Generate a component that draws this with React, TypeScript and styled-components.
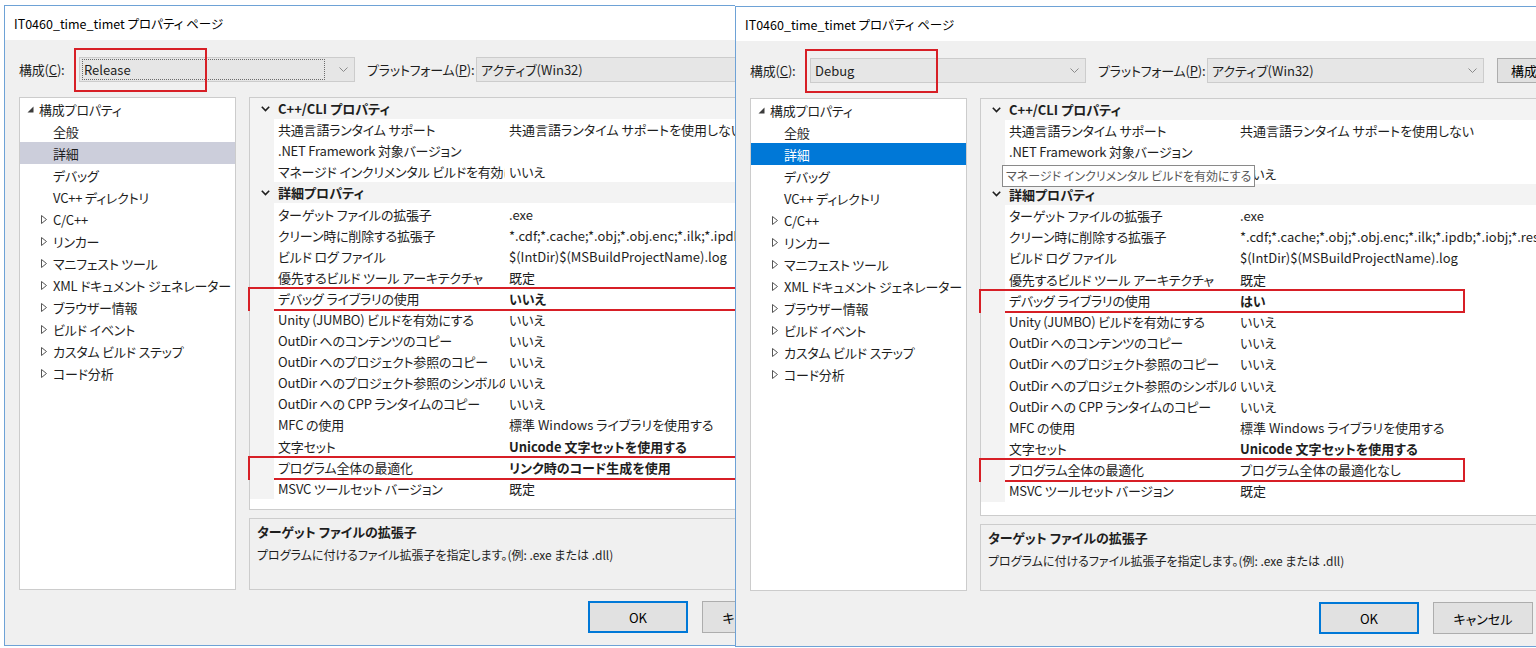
import React from "react";
import styled, { createGlobalStyle } from "styled-components";

const GlobalStyle = createGlobalStyle`
  html, body {
    margin: 0;
    padding: 0;
    background: #ffffff;
  }
  body {
    font-family: "Noto Sans CJK JP", "Noto Sans", sans-serif;
    font-size: 13px;
    color: #000;
    font-feature-settings: "palt";
  }
`;

type Prop =
  | { category: string }
  | { name: string; value: string; bold?: boolean; mark?: boolean; tip?: string };

type TreeItem = { label: string; kind: "root" | "leaf" | "closed" };

const CLEAN_EXT =
  "*.cdf;*.cache;*.obj;*.obj.enc;*.ilk;*.ipdb;*.iobj;*.resources;*.tlb;*.tli;*.tlh;*.tmp;*.rsp;*.pgc;*.pgd;*.meta;*.tlog;*.manifest;*.res;*.pch;*.exp;*.idb;*.rep;*.xdc;*.pdb;*_manifest.rc;*.bsc;*.sbr;*.xml";

const treeItems: TreeItem[] = [
  { label: "構成プロパティ", kind: "root" },
  { label: "全般", kind: "leaf" },
  { label: "詳細", kind: "leaf" },
  { label: "デバッグ", kind: "leaf" },
  { label: "VC++ ディレクトリ", kind: "leaf" },
  { label: "C/C++", kind: "closed" },
  { label: "リンカー", kind: "closed" },
  { label: "マニフェスト ツール", kind: "closed" },
  { label: "XML ドキュメント ジェネレーター", kind: "closed" },
  { label: "ブラウザー情報", kind: "closed" },
  { label: "ビルド イベント", kind: "closed" },
  { label: "カスタム ビルド ステップ", kind: "closed" },
  { label: "コード分析", kind: "closed" },
];

const makeProps = (debugLib: string, wholeOpt: string, wholeBold: boolean, tip: boolean): Prop[] => [
  { category: "C++/CLI プロパティ" },
  { name: "共通言語ランタイム サポート", value: "共通言語ランタイム サポートを使用しない" },
  { name: ".NET Framework 対象バージョン", value: "" },
  {
    name: "マネージド インクリメンタル ビルドを有効にする",
    value: "いいえ",
    tip: tip ? "マネージド インクリメンタル ビルドを有効にする" : undefined,
  },
  { category: "詳細プロパティ" },
  { name: "ターゲット ファイルの拡張子", value: ".exe" },
  { name: "クリーン時に削除する拡張子", value: CLEAN_EXT },
  { name: "ビルド ログ ファイル", value: "$(IntDir)$(MSBuildProjectName).log" },
  { name: "優先するビルド ツール アーキテクチャ", value: "既定" },
  { name: "デバッグ ライブラリの使用", value: debugLib, bold: true, mark: true },
  { name: "Unity (JUMBO) ビルドを有効にする", value: "いいえ" },
  { name: "OutDir へのコンテンツのコピー", value: "いいえ" },
  { name: "OutDir へのプロジェクト参照のコピー", value: "いいえ" },
  { name: "OutDir へのプロジェクト参照のシンボルのコピー", value: "いいえ" },
  { name: "OutDir への CPP ランタイムのコピー", value: "いいえ" },
  { name: "MFC の使用", value: "標準 Windows ライブラリを使用する" },
  { name: "文字セット", value: "Unicode 文字セットを使用する", bold: true },
  { name: "プログラム全体の最適化", value: wholeOpt, bold: wholeBold, mark: true },
  { name: "MSVC ツールセット バージョン", value: "既定" },
];

const RED = "#d71f26";

const Page = styled.div`
  display: flex;
  align-items: flex-start;
  width: 1536px;
  height: 648px;
  padding-left: 4px;
  box-sizing: border-box;
  overflow: hidden;
  background: #ffffff;
`;

const Window = styled.div<{ $w: number; $top: number }>`
  flex: none;
  width: ${(p) => p.$w}px;
  margin-top: ${(p) => p.$top}px;
  border: 1px solid #6ea2d6;
  border-right: none;
  box-sizing: border-box;
  overflow: hidden;
  background: #f0f0f0;
`;

const Inner = styled.div`
  width: 924px;
  display: flex;
  flex-direction: column;
`;

const TitleBar = styled.div`
  height: 34px;
  background: #ffffff;
  display: flex;
  align-items: center;
  padding-left: 9px;
  font-size: 12.5px;
  color: #000;
`;

const Body = styled.div`
  padding: 17px 13px 12px 14px;
  display: flex;
  flex-direction: column;
`;

const ConfigRow = styled.div`
  display: flex;
  align-items: center;
  height: 25px;
`;

const Label = styled.span<{ $w: number }>`
  width: ${(p) => p.$w}px;
  flex: none;
  white-space: nowrap;
  color: #1e1e1e;
  letter-spacing: -0.2px;
`;

const Combo = styled.div<{ $w: number; $mark?: boolean }>`
  position: relative;
  width: ${(p) => p.$w}px;
  height: 25px;
  flex: none;
  box-sizing: border-box;
  border: 1px solid #cccccc;
  background: #e6e6e6;
  display: flex;
  align-items: center;
  margin-right: 12px;
  &::after {
    content: "";
    display: ${(p) => (p.$mark ? "block" : "none")};
    position: absolute;
    left: -6px;
    top: -10px;
    width: 133px;
    height: 44px;
    border: 2px solid ${RED};
    box-sizing: border-box;
  }
`;

const ComboText = styled.span<{ $focus?: boolean }>`
  flex: 1;
  margin: 0 14px 0 2px;
  padding: 0 1px;
  height: 19px;
  line-height: 19px;
  border: 1px dotted ${(p) => (p.$focus ? "#6b6b6b" : "transparent")};
  color: #1e1e1e;
  white-space: nowrap;
`;

const Chevron = styled.svg`
  flex: none;
  margin-right: 6px;
`;

const ManagerButton = styled.button`
  flex: 1;
  height: 25px;
  margin-left: 1px;
  border: 1px solid #adadad;
  background: #e1e1e1;
  font: inherit;
  color: #000;
  text-align: left;
  padding-left: 13px;
  white-space: nowrap;
`;

const Main = styled.div`
  display: flex;
  gap: 13px;
  margin-top: 15px;
  height: 493px;
`;

const Tree = styled.div`
  width: 217px;
  flex: none;
  box-sizing: border-box;
  border: 1px solid #cccccc;
  background: #ffffff;
`;

const TreeRow = styled.div<{ $indent: number; $sel?: "focus" | "blur" }>`
  height: 22px;
  display: flex;
  align-items: center;
  padding-left: ${(p) => p.$indent}px;
  white-space: nowrap;
  letter-spacing: -0.2px;
  background: ${(p) => (p.$sel === "focus" ? "#0078d7" : p.$sel === "blur" ? "#cccedb" : "transparent")};
  color: ${(p) => (p.$sel === "focus" ? "#ffffff" : "#1e1e1e")};
`;

const Toggle = styled.span`
  width: 12px;
  flex: none;
  display: flex;
  align-items: center;
`;

const RightCol = styled.div`
  flex: 1;
  display: flex;
  flex-direction: column;
  gap: 8px;
  min-width: 0;
`;

const Grid = styled.div<{ $h: number }>`
  height: ${(p) => p.$h}px;
  flex: none;
  box-sizing: border-box;
  border: 1px solid #cccccc;
  background: #ffffff;
  position: relative;
`;

const GridRow = styled.div<{ $h: number; $mark?: number }>`
  position: relative;
  height: ${(p) => p.$h}px;
  display: flex;
  align-items: center;
  &::after {
    content: "";
    display: ${(p) => (p.$mark ? "block" : "none")};
    position: absolute;
    left: -2px;
    top: -1px;
    width: ${(p) => p.$mark || 0}px;
    height: calc(100% + 3px);
    border: 2px solid ${RED};
    box-sizing: border-box;
    pointer-events: none;
  }
`;

const Gutter = styled.span`
  width: 24px;
  flex: none;
  align-self: stretch;
  background: #f3f3f3;
  display: flex;
  align-items: center;
  justify-content: flex-end;
  padding-right: 4px;
  box-sizing: border-box;
`;

const CategoryName = styled.span`
  flex: 1;
  align-self: stretch;
  display: flex;
  align-items: center;
  padding-left: 4px;
  background: #f3f3f3;
  font-weight: 700;
  color: #1e1e1e;
  white-space: nowrap;
`;

const PropName = styled.span`
  width: 231px;
  flex: none;
  padding-left: 4px;
  box-sizing: border-box;
  overflow: hidden;
  white-space: nowrap;
  letter-spacing: -0.2px;
  color: #1e1e1e;
`;

const PropValue = styled.span<{ $bold?: boolean }>`
  padding-left: 4px;
  white-space: nowrap;
  font-weight: ${(p) => (p.$bold ? 700 : 400)};
  color: #1e1e1e;
`;

const Tooltip = styled.span`
  position: absolute;
  left: 21px;
  top: 2px;
  height: 22px;
  box-sizing: border-box;
  padding: 0 3px;
  display: flex;
  align-items: center;
  background: #ffffff;
  border: 1px solid #8a8a8a;
  color: #575757;
  font-size: 12px;
  white-space: nowrap;
  z-index: 2;
`;

const Description = styled.div`
  flex: 1;
  box-sizing: border-box;
  border: 1px solid #cccccc;
  background: #f0f0f0;
  padding: 1px 7px;
  line-height: 23px;
  color: #1e1e1e;
`;

const DescTitle = styled.div`
  font-weight: 700;
`;

const DescText = styled.div`
  font-size: 12px;
`;

const Footer = styled.div`
  display: flex;
  justify-content: flex-end;
  gap: 14px;
  margin-top: 11px;
`;

const DialogButton = styled.button<{ $default?: boolean }>`
  width: 100px;
  height: 32px;
  box-sizing: border-box;
  border: ${(p) => (p.$default ? "2px solid #0078d7" : "1px solid #adadad")};
  background: #e1e1e1;
  font: inherit;
  color: #000;
`;

const ComboChevron = () => (
  <Chevron width="9" height="5" viewBox="0 0 9 5">
    <polyline points="0.5,0.5 4.5,4.5 8.5,0.5" fill="none" stroke="#8a8a8a" strokeWidth="1" />
  </Chevron>
);

const ExpandedIcon = () => (
  <svg width="7" height="7" viewBox="0 0 7 7">
    <polygon points="6.5,0.5 6.5,6.5 0.5,6.5" fill="#3c3c3c" />
  </svg>
);

const CollapsedIcon = () => (
  <svg width="6" height="9" viewBox="0 0 6 9">
    <polygon points="0.5,0.5 5.5,4.5 0.5,8.5" fill="none" stroke="#555" strokeWidth="1" />
  </svg>
);

const CategoryChevron = () => (
  <svg width="9" height="6" viewBox="0 0 9 6">
    <polyline points="0.8,0.8 4.5,4.6 8.2,0.8" fill="none" stroke="#1e1e1e" strokeWidth="1.6" />
  </svg>
);

interface IDialog {
  width: number;
  top: number;
  config: string;
  focused: boolean;
  treeFocused: boolean;
  props: Prop[];
  rowH: number;
  gridH: number;
  markW: number;
}

const Dialog = ({ width, top, config, focused, treeFocused, props, rowH, gridH, markW }: IDialog) => (
  <Window $w={width} $top={top}>
    <Inner>
      <TitleBar>IT0460_time_timet プロパティ ページ</TitleBar>
      <Body>
        <ConfigRow>
          <Label $w={60}>
            構成(<u>C</u>):
          </Label>
          <Combo $w={276} $mark>
            <ComboText $focus={focused}>{config}</ComboText>
            <ComboChevron />
          </Combo>
          <Label $w={109}>
            プラットフォーム(<u>P</u>):
          </Label>
          <Combo $w={277}>
            <ComboText>アクティブ(Win32)</ComboText>
            <ComboChevron />
          </Combo>
          <ManagerButton>
            構成マネージャー(<u>O</u>)...
          </ManagerButton>
        </ConfigRow>

        <Main>
          <Tree>
            {treeItems.map((item) => (
              <TreeRow
                key={item.label}
                $indent={item.kind === "root" ? 7 : 21}
                $sel={item.label === "詳細" ? (treeFocused ? "focus" : "blur") : undefined}
              >
                <Toggle>
                  {item.kind === "root" && <ExpandedIcon />}
                  {item.kind === "closed" && <CollapsedIcon />}
                </Toggle>
                {item.label}
              </TreeRow>
            ))}
          </Tree>

          <RightCol>
            <Grid $h={gridH}>
              {props.map((p) =>
                "category" in p ? (
                  <GridRow key={p.category} $h={rowH}>
                    <Gutter>
                      <CategoryChevron />
                    </Gutter>
                    <CategoryName>{p.category}</CategoryName>
                  </GridRow>
                ) : (
                  <GridRow key={p.name} $h={rowH} $mark={p.mark ? markW : undefined}>
                    <Gutter />
                    <PropName>{p.name}</PropName>
                    <PropValue $bold={p.bold}>{p.value}</PropValue>
                    {p.tip && <Tooltip>{p.tip}</Tooltip>}
                  </GridRow>
                )
              )}
            </Grid>
            <Description>
              <DescTitle>ターゲット ファイルの拡張子</DescTitle>
              <DescText>プログラムに付けるファイル拡張子を指定します。(例: .exe または .dll)</DescText>
            </Description>
          </RightCol>
        </Main>

        <Footer>
          <DialogButton $default>OK</DialogButton>
          <DialogButton>キャンセル</DialogButton>
          <DialogButton>
            適用(<u>A</u>)
          </DialogButton>
        </Footer>
      </Body>
    </Inner>
  </Window>
);

export default function App() {
  return (
    <>
      <GlobalStyle />
      <Page>
        <Dialog
          width={731}
          top={5}
          config="Release"
          focused
          treeFocused={false}
          props={makeProps("いいえ", "リンク時のコード生成を使用", true, false)}
          rowH={21.1}
          gridH={413}
          markW={492}
        />
        <Dialog
          width={805}
          top={6}
          config="Debug"
          focused={false}
          treeFocused
          props={makeProps("はい", "プログラム全体の最適化なし", false, true)}
          rowH={21.2}
          gridH={418}
          markW={486}
        />
      </Page>
    </>
  );
}
